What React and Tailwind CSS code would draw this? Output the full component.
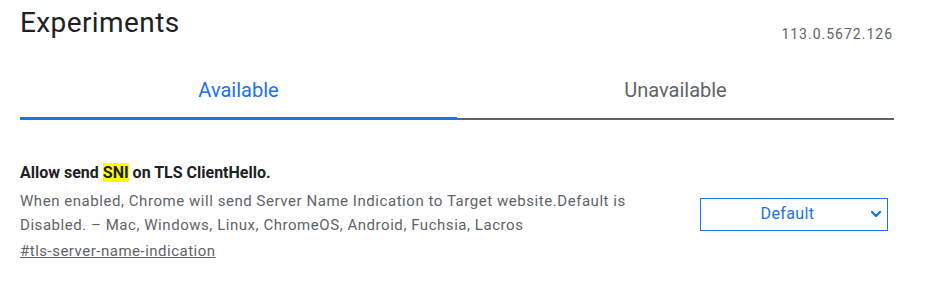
import { ChevronDown } from 'lucide-react';

const App = () => {
  return (
    <div className="min-h-[297px] w-[951px] bg-white font-['Roboto',sans-serif] text-[#202124]">
      <div className="px-5 pt-[5px]">
        {/* Header */}
        <div className="flex items-start justify-between w-[873px]">
          <h1 className="text-[28px] leading-[36px] font-normal tracking-[0.4px]">Experiments</h1>
          <span className="mt-[19px] text-[14px] leading-[20px] tracking-[1px] text-[#5f6368]">113.0.5672.126</span>
        </div>

        {/* Tabs */}
        <div className="mt-[32px] flex items-end w-[874px]">
          <div className="flex-1 border-b-[3px] border-[#1a73e8] pb-[13px] text-center text-[20px] leading-[28px] text-[#1a73e8]">
            Available
          </div>
          <div className="flex-1 border-b-2 border-[#5f6368] pb-[14px] text-center text-[20px] leading-[28px] text-[#5f6368]">
            Unavailable
          </div>
        </div>

        {/* Flag entry */}
        <div className="mt-[43px] flex w-[873px] items-center justify-between">
          <div>
            <h2 className="text-[16px] font-bold leading-[20px]">
              Allow send <mark className="bg-[#ffff00] text-[#202124]">SNI</mark> on TLS ClientHello.
            </h2>
            <p className="mt-[6px] w-[625px] text-[15px] leading-[24px] tracking-[0.55px] text-[#5f6368]">
              When enabled, Chrome will send Server Name Indication to Target website.Default is Disabled. – Mac, Windows, Linux, ChromeOS, Android, Fuchsia, Lacros
            </p>
            <a className="text-[15px] leading-[28px] tracking-[0.5px] text-[#5f6368] underline">#tls-server-name-indication</a>
          </div>
          <div className="mr-[5px] flex h-[33px] w-[188px] items-center border border-[#1a73e8] pl-[6px] pr-[3px] text-[#1a73e8]">
            <span className="flex-1 text-center text-[16px] tracking-[0.4px]">Default</span>
            <ChevronDown className="h-4 w-4" strokeWidth={3.5} />
          </div>
        </div>
      </div>
    </div>
  );
};

export default App;
